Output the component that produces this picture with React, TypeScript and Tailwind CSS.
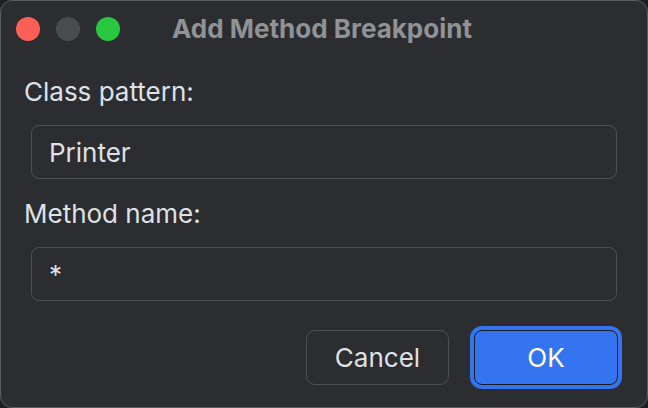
import React from "react";

export default function App() {
  const font = { fontFamily: "Inter, 'Noto Sans', sans-serif" };
  return (
    <div className="w-[648px] h-[408px] bg-[#1e1f22]" style={font}>
      <div className="w-full h-full rounded-[12px] border border-[#5a5c60] bg-[#2b2d30] flex flex-col text-[#dfe1e5] overflow-hidden">
        <div className="relative h-[54px] shrink-0 flex items-center pl-[15px] gap-[16px] pt-[2px]">
          <span className="w-[24px] h-[24px] rounded-full bg-[#ff5f57]" />
          <span className="w-[24px] h-[24px] rounded-full bg-[#4a4b4e]" />
          <span className="w-[24px] h-[24px] rounded-full bg-[#28c840]" />
          <div className="absolute inset-0 flex items-center justify-center pr-[4px] text-[26px] font-bold text-[#919295] pointer-events-none">
            Add Method Breakpoint
          </div>
        </div>
        <div className="flex flex-col px-[23px] pt-[21px]">
          <div className="text-[26px] leading-[32px]">Class pattern:</div>
          <div className="mt-[17px] mx-[7px] h-[54px] rounded-[8px] border-[1.5px] border-[#4e5054] flex items-center pl-[17px] text-[26px]">
            Printer
          </div>
          <div className="mt-[19px] text-[26px] leading-[32px]">Method name:</div>
          <div className="mt-[17px] mx-[7px] h-[54px] rounded-[8px] border-[1.5px] border-[#4e5054] flex items-center pl-[17px] text-[26px]">
            *
          </div>
        </div>
        <div className="flex justify-end gap-[25px] pr-[29px] mt-[29px]">
          <button className="w-[143px] h-[55px] rounded-[9px] border-[1.5px] border-[#4e5054] text-[26px] text-[#dfe1e5]">
            Cancel
          </button>
          <button className="w-[144px] h-[55px] rounded-[8px] border border-[#1b1c1f] bg-[#3574f0] text-[26px] text-white shadow-[0_0_0_4px_#3574f0]">
            OK
          </button>
        </div>
      </div>
    </div>
  );
}
